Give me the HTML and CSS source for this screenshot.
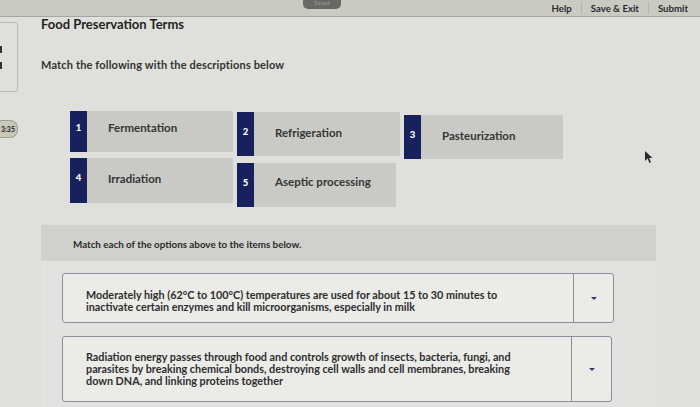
FILE: index.html
```html
<!DOCTYPE html>
<html>
<head>
<meta charset="utf-8">
<link rel="stylesheet" href="styles.css">
</head>
<body>
<header class="topbar">
  <div class="saved">Saved</div>
  <nav class="nav">
    <span class="nav-item">Help</span>
    <span class="sep"></span>
    <span class="nav-item">Save &amp; Exit</span>
    <span class="sep"></span>
    <span class="nav-item">Submit</span>
  </nav>
</header>
<div class="page">
  <aside class="rail">
    <div class="rail-box"><span class="mark"></span><span class="mark"></span></div>
    <div class="timer">3:35</div>
  </aside>
  <main class="main">
    <h1 class="title">Food Preservation Terms</h1>
    <p class="instr">Match the following with the descriptions below</p>
    <div class="terms">
      <div class="term-row">
        <div class="term"><span class="num">1</span><span class="label">Fermentation</span></div>
        <div class="term t2"><span class="num">2</span><span class="label">Refrigeration</span></div>
        <div class="term t3"><span class="num">3</span><span class="label">Pasteurization</span></div>
      </div>
      <div class="term-row row2">
        <div class="term t4"><span class="num">4</span><span class="label">Irradiation</span></div>
        <div class="term t5"><span class="num">5</span><span class="label">Aseptic processing</span></div>
      </div>
    </div>
    <section class="match">
      <div class="band">Match each of the options above to the items below.</div>
      <div class="answers">
        <div class="answer">
          <div class="desc">Moderately high (62°C to 100°C) temperatures are used for about 15 to 30 minutes to inactivate certain enzymes and kill microorganisms, especially in milk</div>
          <div class="dd"><span class="caret"></span></div>
        </div>
        <div class="answer tall">
          <div class="desc">Radiation energy passes through food and controls growth of insects, bacteria, fungi, and parasites by breaking chemical bonds, destroying cell walls and cell membranes, breaking down DNA, and linking proteins together</div>
          <div class="dd"><span class="caret"></span></div>
        </div>
      </div>
    </section>
  </main>
  <svg class="cursor" width="10" height="14" viewBox="0 0 10 14"><path d="M1 1 L1 11 L3.5 8.5 L5.5 13 L7 12.3 L5 8 L8.5 8 Z" fill="#2a2a2e"/></svg>
</div>
</body>
</html>
```
FILE: styles.css
```css
* { box-sizing: border-box; }
html, body { margin: 0; padding: 0; }
body {
  width: 700px;
  height: 407px;
  overflow: hidden;
  background: #dfdfdb;
  font-family: Lato, "Open Sans", "Liberation Sans", sans-serif;
  color: #2c2c2c;
}
.topbar {
  height: 17px;
  background: #c9cac2;
  border-bottom: 1px solid #a4a6a0;
  display: flex;
  align-items: flex-start;
}
.saved {
  margin-left: 303px;
  width: 38px;
  height: 9px;
  background: #686866;
  border-radius: 0 0 5px 5px;
  color: #9a9a98;
  font-size: 6px;
  line-height: 5px;
  text-align: center;
  overflow: hidden;
}
.nav {
  margin-left: auto;
  margin-right: 12px;
  display: flex;
  align-items: center;
  gap: 9px;
  padding-top: 2px;
}
.nav-item {
  font-size: 9.6px;
  font-weight: 700;
  color: #2a2a2a;
}
.sep {
  width: 1px;
  height: 12px;
  background: #b2b3ac;
}
.page {
  position: relative;
  display: flex;
  height: 390px;
}
.rail {
  width: 41px;
  display: flex;
  flex-direction: column;
}
.rail-box {
  margin-top: 5px;
  width: 18px;
  height: 70px;
  border: 1px solid #b9bab5;
  border-left: none;
  border-radius: 0 4px 4px 0;
  display: flex;
  flex-direction: column;
  justify-content: center;
  gap: 9px;
}
.mark {
  width: 2px;
  height: 7px;
  background: #333;
}
.timer {
  margin-top: 28px;
  width: 18px;
  height: 18px;
  border: 1px solid #9ea08f;
  border-left: none;
  border-radius: 0 8px 8px 0;
  background: #c7c8b8;
  font-size: 7px;
  font-weight: 900;
  line-height: 16px;
  text-align: right;
  padding-right: 2px;
  color: #333;
  overflow: hidden;
}
.main {
  flex: 1;
  display: flex;
  flex-direction: column;
}
.title {
  margin: -1px 0 0;
  font-size: 13px;
  line-height: 16px;
  font-weight: 700;
  color: #1f1f1f;
}
.instr {
  margin: 26px 0 0;
  font-size: 11px;
  line-height: 13px;
  font-weight: 700;
  letter-spacing: 0.15px;
  color: #333;
}
.terms {
  margin: 40px 0 0 29px;
  display: flex;
  flex-direction: column;
}
.term-row {
  display: flex;
  align-items: flex-start;
  gap: 4px;
}
.row2 { margin-top: -1px; }
.term {
  width: 163px;
  height: 41px;
  background: #c9cac5;
  display: flex;
  align-items: flex-start;
}
.t2 { margin-top: 1px; height: 44px; }
.t3 { width: 159px; margin-top: 4px; height: 44px; }
.t4 { height: 45px; }
.t5 { width: 159px; margin-top: 5px; height: 44px; }
.num {
  width: 17px;
  align-self: stretch;
  background: #17225c;
  color: #fff;
  font-size: 9.5px;
  font-weight: 900;
  padding-top: 11px;
  text-align: center;
}
.label {
  margin-left: 21px;
  padding-top: 10px;
  font-size: 11.5px;
  font-weight: 700;
  color: #353535;
}
.t2 .label, .t3 .label { padding-top: 14px; }
.t4 .label { padding-top: 14px; }
.t5 .label { padding-top: 12px; }
.t2 .num, .t3 .num, .t4 .num, .t5 .num { padding-top: 14px; }
.match {
  margin-top: 18px;
  width: 615px;
  flex: 1;
  background: #e2e3e0;
}
.band {
  height: 36px;
  background: #d0d1cd;
  padding: 13px 0 0 32px;
  font-size: 9.8px;
  font-weight: 700;
  color: #2a2a2a;
}
.answers {
  padding: 12px 0 0 21px;
  display: flex;
  flex-direction: column;
  gap: 13px;
}
.answer {
  width: 552px;
  height: 50px;
  display: flex;
  background: #ebebe8;
  border: 1px solid #8a8e98;
  border-radius: 3px;
}
.answer.tall { height: 66px; width: 550px; }
.desc {
  flex: none;
  width: 510px;
  padding: 15px 36px 0 23px;
  font-size: 10.8px;
  font-weight: 700;
  line-height: 12px;
  color: #2e2e2e;
}
.tall .desc { width: 508px; padding-top: 14px; }
.dd {
  flex: 1;
  border-left: 1px solid #8a8e98;
  display: flex;
  align-items: center;
  justify-content: center;
}
.caret {
  width: 0;
  height: 0;
  border-left: 3px solid transparent;
  border-right: 3px solid transparent;
  border-top: 3px solid #2a3a6a;
}
.cursor {
  position: absolute;
  left: 644px;
  top: 133px;
}
```
